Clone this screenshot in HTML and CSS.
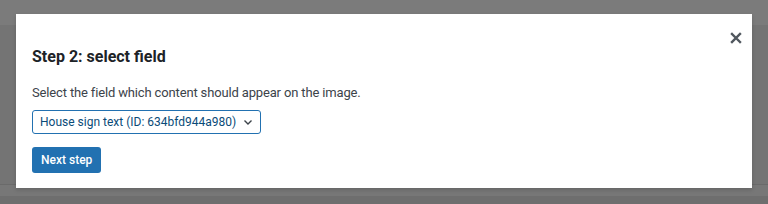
FILE: index.html
```html
<!DOCTYPE html>
<html>
<head>
    <meta charset="UTF-8" />
    <title>Select field</title>
    <link rel="stylesheet" href="styles.css">
</head>
<body>

    <div class="modal">
        <button class="close" aria-label="Close">
            <svg width="12" height="12" viewBox="0 0 12 12">
                <path d="M2 2 L10 10 M10 2 L2 10" stroke="#50575e" stroke-width="2.4" stroke-linecap="square"/>
            </svg>
        </button>

        <h2 class="title">Step 2: select field</h2>
        <p class="desc">Select the field which content should appear on the image.</p>

        <div class="select">
            <span>House sign text (ID: 634bfd944a980)</span>
            <svg width="10" height="10" viewBox="0 0 10 10">
                <path d="M1.5 3.5 L5 7 L8.5 3.5" fill="none" stroke="#3c434a" stroke-width="1.4"/>
            </svg>
        </div>

        <div><button class="primary">Next step</button></div>
    </div>

</body>
</html>
```

FILE: styles.css
```css
body {
    margin: 0;
    height: 204px;
    font-family: Roboto, "Liberation Sans", Arial, sans-serif;
    background: linear-gradient(to bottom,
        #7b7b7b 0, #7b7b7b 25px,
        #747474 25px, #747474 184px,
        #6a6a6a 184px, #6a6a6a 185px,
        #777777 185px, #777777 196px,
        #6e6e6e 196px);
    padding-top: 14px;
    box-sizing: border-box;
}

div.modal {
    position: relative;
    margin-left: 16px;
    width: 736px;
    height: 174px;
    box-sizing: border-box;
    background-color: #ffffff;
    padding: 32px 16px 16px 16px;
    box-shadow: 0 2px 4px rgba(0, 0, 0, 0.15);
}

button.close {
    position: absolute;
    top: 14px;
    right: 6px;
    width: 20px;
    height: 20px;
    padding: 0;
    border: none;
    background: none;
    display: flex;
    align-items: center;
    justify-content: center;
}

h2.title {
    margin: 0;
    font-size: 16px;
    line-height: 22px;
    font-weight: bold;
    color: #1d2327;
}

p.desc {
    margin: 16px 0 8px 0;
    font-size: 13px;
    letter-spacing: -0.15px;
    line-height: 18px;
    color: #3c434a;
}

div.select {
    display: inline-flex;
    align-items: center;
    justify-content: space-between;
    width: 229px;
    height: 24px;
    box-sizing: border-box;
    border: 1px solid #2271b1;
    border-radius: 3px;
    padding: 0 7px 0 7px;
    font-size: 12px;
    white-space: nowrap;
    color: #0a4b78;
    margin-bottom: 13px;
    vertical-align: top;
}

button.primary {
    height: 26px;
    padding: 0 9px;
    border: none;
    border-radius: 3px;
    background-color: #2271b1;
    color: #ffffff;
    font-family: Roboto, "Liberation Sans", Arial, sans-serif;
    font-size: 12px;
    font-weight: 500;
}
```
